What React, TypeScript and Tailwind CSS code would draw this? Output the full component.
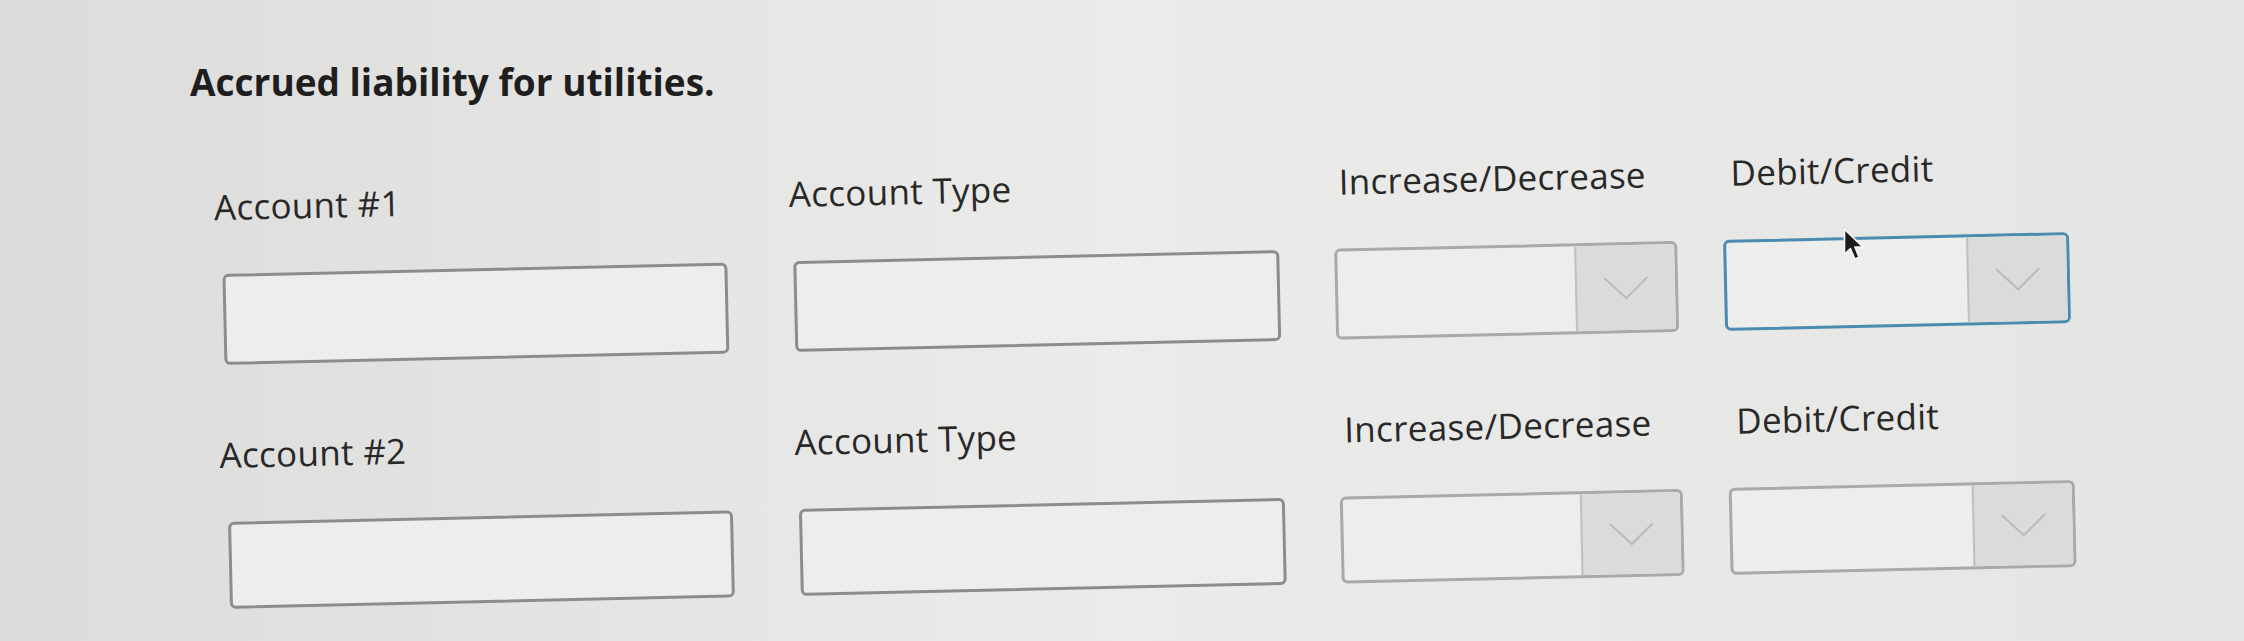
type Field = { label: string; kind: "text" | "select"; focused?: boolean };

const rows: Field[][] = [
  [
    { label: "Account #1", kind: "text" },
    { label: "Account Type", kind: "text" },
    { label: "Increase/Decrease", kind: "select" },
    { label: "Debit/Credit", kind: "select", focused: true },
  ],
  [
    { label: "Account #2", kind: "text" },
    { label: "Account Type", kind: "text" },
    { label: "Increase/Decrease", kind: "select" },
    { label: "Debit/Credit", kind: "select" },
  ],
];

// label nudges per column, box widths per column
const labelPad = ["-ml-[7px]", "-ml-[3px]", "ml-[6px]", "ml-[9px]"];
const boxWidth = ["w-[505px]", "w-[486px]", "w-[343px]", "w-[346px]"];

function Chevron() {
  return (
    <svg width="46" height="24" viewBox="0 0 46 24" fill="none">
      <path d="M1.5 1.5 L23 22 L44.5 1.5" stroke="#b9b9b7" strokeWidth="2" />
    </svg>
  );
}

function Box({ field, col, tall }: { field: Field; col: number; tall: boolean }) {
  const h = tall ? "h-[91px]" : "h-[87px]";
  if (field.kind === "text") {
    return (
      <div className={`${boxWidth[col]} ${h} rounded-[6px] border-[3px] border-[#8c8c8a] bg-[#ededeb]`} />
    );
  }
  const border = field.focused ? "border-[#4a8bb0]" : "border-[#a9a9a7]";
  return (
    <div className={`${boxWidth[col]} ${h} flex overflow-hidden rounded-[6px] border-[3px] ${border} bg-[#ededeb]`}>
      <div className="flex-1" />
      <div className="flex w-[100px] items-center justify-center border-l-[2px] border-[#c0c0be] bg-[#dbdbd9]">
        <Chevron />
      </div>
    </div>
  );
}

function Cursor() {
  return (
    <svg width="23" height="36" viewBox="0 0 16 24" className="absolute left-[1843px] top-[227px]">
      <path
        d="M1 1 L1 18.5 L5.2 14.6 L8.2 21.8 L11.2 20.5 L8.3 13.4 L14 13.4 Z"
        fill="#1c1c1e"
        stroke="#f4f4f4"
        strokeWidth="1.2"
        strokeLinejoin="round"
      />
    </svg>
  );
}

export default function App() {
  return (
    <div
      className="relative h-[641px] w-full overflow-hidden bg-linear-to-r from-[#dcdcdb] via-[#ebebe9] to-[#e5e5e3] text-[#282828]"
      style={{ fontFamily: '"Open Sans", "Noto Sans", sans-serif' }}
    >
      <h1 className="pl-[190px] pt-[60px] text-[37px] font-bold leading-[44px] text-[#1e1e1e]">
        Accrued liability for utilities.
      </h1>

      <div className="ml-[225px] mt-[62px] w-[1847px] origin-center rotate-[-1.3deg]">
        {rows.map((row, r) => (
          <div
            key={r}
            className={`grid grid-cols-[571px_541px_389px_346px] ${r === 1 ? "mt-[70px]" : ""}`}
          >
            {row.map((f, c) => (
              <div key={c} className="flex flex-col">
                <span
                  className={`${labelPad[c]} mb-[47px] text-[35px] leading-[40px] tracking-[0.3px] whitespace-nowrap`}
                >
                  {f.label}
                </span>
                <Box field={f} col={c} tall={r === 0} />
              </div>
            ))}
          </div>
        ))}
      </div>

      <Cursor />
    </div>
  );
}
